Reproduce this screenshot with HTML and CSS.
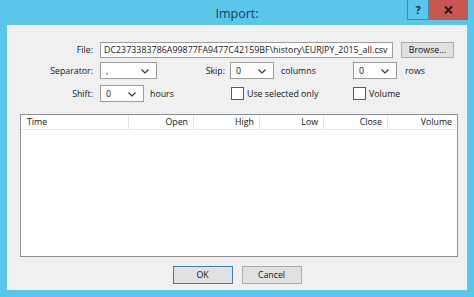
FILE: index.html
```html
<!DOCTYPE html>
<html>
<head>
<meta charset="utf-8">
<link rel="stylesheet" href="styles.css">
</head>
<body>
<div class="window">
  <div class="titlebar">
    <div class="title">Import:</div>
    <div class="caption-btns">
      <div class="cap-btn help">?</div>
      <div class="cap-btn close">
        <svg width="9" height="8" viewBox="0 0 9 8"><path d="M1 0.5 L8 7.5 M8 0.5 L1 7.5" stroke="#1b1b1b" stroke-width="2"/></svg>
      </div>
    </div>
  </div>
  <div class="client">
    <div class="row row-file">
      <div class="lbl lbl-main">File:</div>
      <div class="input file-input">DC2373383786A99877FA9477C42159BF\history\EURJPY_2015_all.csv</div>
      <div class="btn browse">Browse...</div>
    </div>
    <div class="row row-sep">
      <div class="lbl lbl-main">Separator:</div>
      <div class="combo w57"><span>,</span><svg class="chev" width="8" height="5" viewBox="0 0 8 5"><path d="M0.5 0.5 L4 4 L7.5 0.5" fill="none" stroke="#333" stroke-width="1.2"/></svg></div>
      <div class="lbl lbl-skip">Skip:</div>
      <div class="combo w44"><span>0</span><svg class="chev" width="8" height="5" viewBox="0 0 8 5"><path d="M0.5 0.5 L4 4 L7.5 0.5" fill="none" stroke="#333" stroke-width="1.2"/></svg></div>
      <div class="txt txt-columns">columns</div>
      <div class="combo w44"><span>0</span><svg class="chev" width="8" height="5" viewBox="0 0 8 5"><path d="M0.5 0.5 L4 4 L7.5 0.5" fill="none" stroke="#333" stroke-width="1.2"/></svg></div>
      <div class="txt txt-rows">rows</div>
    </div>
    <div class="row row-shift">
      <div class="lbl lbl-main">Shift:</div>
      <div class="combo w44"><span>0</span><svg class="chev" width="8" height="5" viewBox="0 0 8 5"><path d="M0.5 0.5 L4 4 L7.5 0.5" fill="none" stroke="#333" stroke-width="1.2"/></svg></div>
      <div class="txt txt-hours">hours</div>
      <div class="check"></div>
      <div class="txt txt-sel">Use selected only</div>
      <div class="check"></div>
      <div class="txt txt-vol">Volume</div>
    </div>
    <div class="table">
      <div class="thead">
        <div class="th c-time left">Time</div>
        <div class="th c-open">Open</div>
        <div class="th c-high">High</div>
        <div class="th c-low">Low</div>
        <div class="th c-close">Close</div>
        <div class="th c-vol">Volume</div>
      </div>
    </div>
    <div class="actions">
      <div class="btn ok">OK</div>
      <div class="btn cancel">Cancel</div>
    </div>
  </div>
</div>
</body>
</html>
```
FILE: styles.css
```css
* { box-sizing: border-box; }
html, body { margin: 0; padding: 0; }
body {
  width: 474px;
  height: 297px;
  overflow: hidden;
  background: #5ac7ea;
  font-family: "Open Sans", "Noto Sans", sans-serif;
  font-size: 8.8px;
  color: #141414;
}
.window {
  width: 474px;
  height: 297px;
  display: flex;
  flex-direction: column;
}
.titlebar {
  height: 25px;
  position: relative;
  display: flex;
  justify-content: center;
  align-items: center;
}
.title {
  font-size: 12.5px;
  color: #1d3d55;
  margin-top: 1px;
}
.caption-btns {
  position: absolute;
  top: 0;
  left: 407px;
  display: flex;
}
.cap-btn {
  height: 20px;
  display: flex;
  align-items: center;
  justify-content: center;
  font-weight: bold;
  font-size: 11px;
}
.help {
  width: 22px;
  color: #1d3040;
  background: #5ac7ea;
  border: 1px solid #3b8fb5;
  border-top: none;
}
.close {
  width: 39px;
  background: #c9574f;
}
.client {
  margin: 0 7px 7px 7px;
  height: 265px;
  background: #f0f0f0;
  display: flex;
  flex-direction: column;
  padding-top: 16px;
}
.row {
  display: flex;
  align-items: center;
  height: 17px;
}
.row-sep { margin-top: 4px; }
.row-shift { margin-top: 6px; }
.lbl { text-align: right; white-space: nowrap; }
.lbl-main { width: 86px; margin-right: 7px; }
.lbl-skip { width: 68px; margin-right: 5px; }
.input {
  height: 16px;
  background: #fff;
  border: 1px solid #9c9c9c;
  padding: 0 3px;
  display: flex;
  align-items: center;
  white-space: nowrap;
  overflow: hidden;
}
.file-input { width: 293px; margin-right: 8px; letter-spacing: 0.05px; }
.btn {
  height: 16px;
  background: #e1e1e1;
  border: 1px solid #acacac;
  display: flex;
  align-items: center;
  justify-content: center;
}
.browse { width: 53px; }
.combo {
  height: 17px;
  background: #fff;
  border: 1px solid #9c9c9c;
  display: flex;
  align-items: center;
  justify-content: space-between;
  padding: 0 7px 0 5px;
}
.combo .chev { margin-top: 1px; }
.w57 { width: 57px; }
.w44 { width: 44px; }
.txt { white-space: nowrap; }
.txt-columns { width: 79px; padding-left: 7px; }
.txt-rows { padding-left: 8px; }
.txt-hours { width: 87px; padding-left: 6px; }
.check {
  width: 13px;
  height: 13px;
  background: #fff;
  border: 1px solid #5a5a5a;
  margin-right: 3px;
}
.txt-sel { width: 106px; }
.table {
  margin: 12px 0 0 13px;
  width: 438px;
  height: 143px;
  background: #fff;
  border: 1px solid #8c9097;
}
.thead {
  display: flex;
  height: 15px;
  border-bottom: 1px solid #e6e6e6;
}
.th {
  text-align: right;
  padding: 0 5px;
  border-right: 1px solid #e3e3e3;
  line-height: 14px;
  white-space: nowrap;
}
.th.left { text-align: left; padding-left: 6px; }
.c-time { width: 108px; }
.c-open { width: 65px; }
.c-high { width: 66px; }
.c-low { width: 64px; }
.c-close { width: 64px; }
.c-vol { width: 69px; border-right: none; }
.actions {
  display: flex;
  justify-content: center;
  gap: 9px;
  margin-top: 9px;
}
.actions .btn { width: 60px; height: 18px; }
.ok { border-color: #3c7fb1; }
```
